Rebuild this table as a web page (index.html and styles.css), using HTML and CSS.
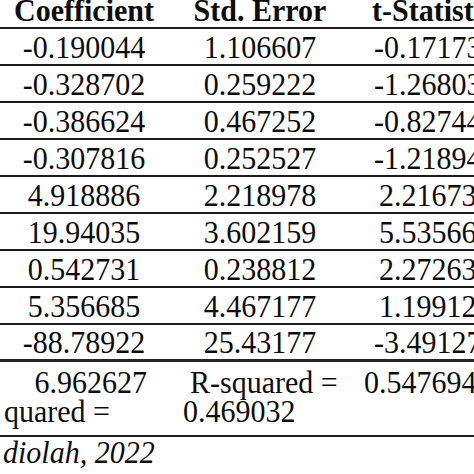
FILE: index.html
```html
<!DOCTYPE html>
<html>
<head>
<meta charset="utf-8">
<link rel="stylesheet" href="styles.css">
</head>
<body>
<div class="page">
  <div class="table">
    <div class="row head">
      <div class="c1">Coefficient</div>
      <div class="c2">Std. Error</div>
      <div class="c3">t-Statistic</div>
    </div>
    <div class="row"><div class="c1">-0.190044</div><div class="c2">1.106607</div><div class="c3">-0.17173</div></div>
    <div class="row"><div class="c1">-0.328702</div><div class="c2">0.259222</div><div class="c3">-1.26803</div></div>
    <div class="row"><div class="c1">-0.386624</div><div class="c2">0.467252</div><div class="c3">-0.82744</div></div>
    <div class="row"><div class="c1">-0.307816</div><div class="c2">0.252527</div><div class="c3">-1.21894</div></div>
    <div class="row"><div class="c1">4.918886</div><div class="c2">2.218978</div><div class="c3 pos">2.21673</div></div>
    <div class="row"><div class="c1">19.94035</div><div class="c2">3.602159</div><div class="c3 pos">5.53566</div></div>
    <div class="row"><div class="c1">0.542731</div><div class="c2">0.238812</div><div class="c3 pos">2.27263</div></div>
    <div class="row"><div class="c1">5.356685</div><div class="c2">4.467177</div><div class="c3 pos">1.19912</div></div>
    <div class="row last"><div class="c1">-88.78922</div><div class="c2">25.43177</div><div class="c3">-3.49127</div></div>
  </div>
  <div class="summary">
    <div class="srow">
      <span class="sa">6.962627</span>
      <span class="sb">R-squared =</span>
      <span class="sc">0.547694</span>
    </div>
    <div class="srow">
      <span class="sd">quared =</span>
      <span class="se">0.469032</span>
    </div>
  </div>
  <div class="caption">diolah, 2022</div>
</div>
</body>
</html>
```

FILE: styles.css
```css
html, body {
  margin: 0;
  padding: 0;
  background: #ffffff;
}
body {
  width: 474px;
  height: 474px;
  overflow: hidden;
  font-family: "Liberation Serif", "Times New Roman", serif;
  font-size: 30px;
  color: #0d0d0d;
}
.page {
  width: 474px;
  height: 474px;
  overflow: hidden;
}
.table {
  margin-top: -8px;
  margin-left: -4px;
  width: 560px;
}
.row {
  display: flex;
  height: 37px;
  box-sizing: border-box;
  border-bottom: 2px solid #1c1c1c;
  line-height: 35px;
  white-space: nowrap;
}
.row > div,
.srow > span,
.caption {
  transform: scaleY(1.08);
}
.row.last {
  border-bottom: 3px solid #242424;
  line-height: 34px;
}
.head {
  font-weight: bold;
}
.c1, .c2 {
  width: 176px;
  text-align: center;
}
.c3 {
  width: 200px;
  text-align: left;
  padding-left: 26px;
  box-sizing: border-box;
}
.c3.pos {
  padding-left: 31px;
}
.head .c3 {
  padding-left: 24px;
}
.summary {
  padding-top: 5px;
  padding-bottom: 10px;
  border-bottom: 2px solid #1c1c1c;
  width: 560px;
}
.srow {
  display: flex;
  height: 29px;
  line-height: 29px;
  white-space: nowrap;
}
.sa {
  width: 147px;
  text-align: right;
}
.sb {
  margin-left: 43px;
  width: 174px;
}
.sd {
  width: 110px;
  text-align: right;
}
.se {
  margin-left: 73px;
}
.caption {
  font-style: italic;
  line-height: 30px;
  padding-left: 3px;
  transform-origin: left center;
}
```
